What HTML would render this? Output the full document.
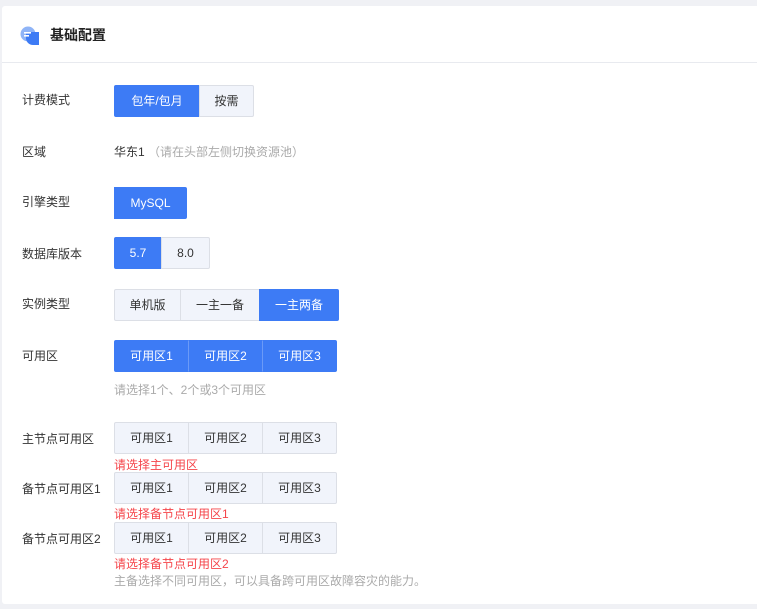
<!DOCTYPE html><html><head><meta charset="utf-8"><style>
body{margin:0;width:757px;height:609px;background:#f0f1f5;font-family:"Liberation Sans","Noto Sans CJK SC",sans-serif;font-size:12px;color:#333;position:relative;overflow:hidden}
.card{position:absolute;left:2px;top:6px;width:760px;height:598px;background:#fff;border-radius:3px}
.hd{position:absolute;left:0;top:0;width:100%;height:56px;border-bottom:1px solid #e8eaef}
.t{position:absolute;left:48px;top:19px;font-size:14px;font-weight:bold;color:#222}
.a{position:absolute}
.l{position:absolute;left:22px;color:#333}
.g{display:flex;position:absolute;left:114px}
.b{height:30px;line-height:30px;text-align:center;border:1px solid #dcdfe6;background:#f1f4fb;color:#333;box-sizing:content-box;margin-left:-1px}
.b:first-child{margin-left:0;border-radius:2px 0 0 2px}
.b:last-child{border-radius:0 2px 2px 0}
.on{background:#3d7bf5;border-color:#3d7bf5;color:#fff}
.r{position:absolute;left:114px;color:#f5444a}
.h{position:absolute;left:114px;color:#aaa}
</style></head><body>
<div class="card">
<div class="hd">
<svg class="a" style="left:18px;top:20px" width="20" height="20" viewBox="0 0 20 20"><circle cx="8" cy="8" r="7.5" fill="#8fb4f7"/><path d="M6 6 H19 V19 H13 A7 7 0 0 1 6 12Z" fill="#3d7bf5"/><rect x="4" y="6" width="7" height="1.6" fill="#fff"/><rect x="4" y="9" width="5" height="1.6" fill="#fff"/></svg>
<div class="t">基础配置</div></div>
</div>
<div class="l" style="top:91px">计费模式</div>
<div class="g" style="top:85px"><div class="b on" style="width:84px">包年/包月</div><div class="b" style="width:53px">按需</div></div>
<div class="l" style="top:143px">区域</div>
<div class="a" style="left:114px;top:143px">华东1 <span style="color:#aaa">（请在头部左侧切换资源池）</span></div>
<div class="l" style="top:193px">引擎类型</div>
<div class="g" style="top:187px"><div class="b on" style="width:71px">MySQL</div></div>
<div class="l" style="top:245px">数据库版本</div>
<div class="g" style="top:237px"><div class="b on" style="width:46px">5.7</div><div class="b" style="width:47px">8.0</div></div>
<div class="l" style="top:295px">实例类型</div>
<div class="g" style="top:289px"><div class="b" style="width:65px">单机版</div><div class="b" style="width:78px">一主一备</div><div class="b on" style="width:78px">一主两备</div></div>
<div class="l" style="top:347px">可用区</div>
<div class="g" style="top:340px"><div class="b on" style="width:73px">可用区1</div><div class="b on" style="width:73px;border-left-color:#6b9af7">可用区2</div><div class="b on" style="width:73px;border-left-color:#6b9af7">可用区3</div></div>
<div class="h" style="top:381px">请选择1个、2个或3个可用区</div>
<div class="l" style="top:430px">主节点可用区</div>
<div class="g" style="top:422px"><div class="b" style="width:73px">可用区1</div><div class="b" style="width:73px">可用区2</div><div class="b" style="width:73px">可用区3</div></div>
<div class="r" style="top:456px">请选择主可用区</div>
<div class="l" style="top:480px">备节点可用区1</div>
<div class="g" style="top:472px"><div class="b" style="width:73px">可用区1</div><div class="b" style="width:73px">可用区2</div><div class="b" style="width:73px">可用区3</div></div>
<div class="r" style="top:505px">请选择备节点可用区1</div>
<div class="l" style="top:530px">备节点可用区2</div>
<div class="g" style="top:522px"><div class="b" style="width:73px">可用区1</div><div class="b" style="width:73px">可用区2</div><div class="b" style="width:73px">可用区3</div></div>
<div class="r" style="top:555px">请选择备节点可用区2</div>
<div class="h" style="top:572px">主备选择不同可用区，可以具备跨可用区故障容灾的能力。</div>
</body></html>
